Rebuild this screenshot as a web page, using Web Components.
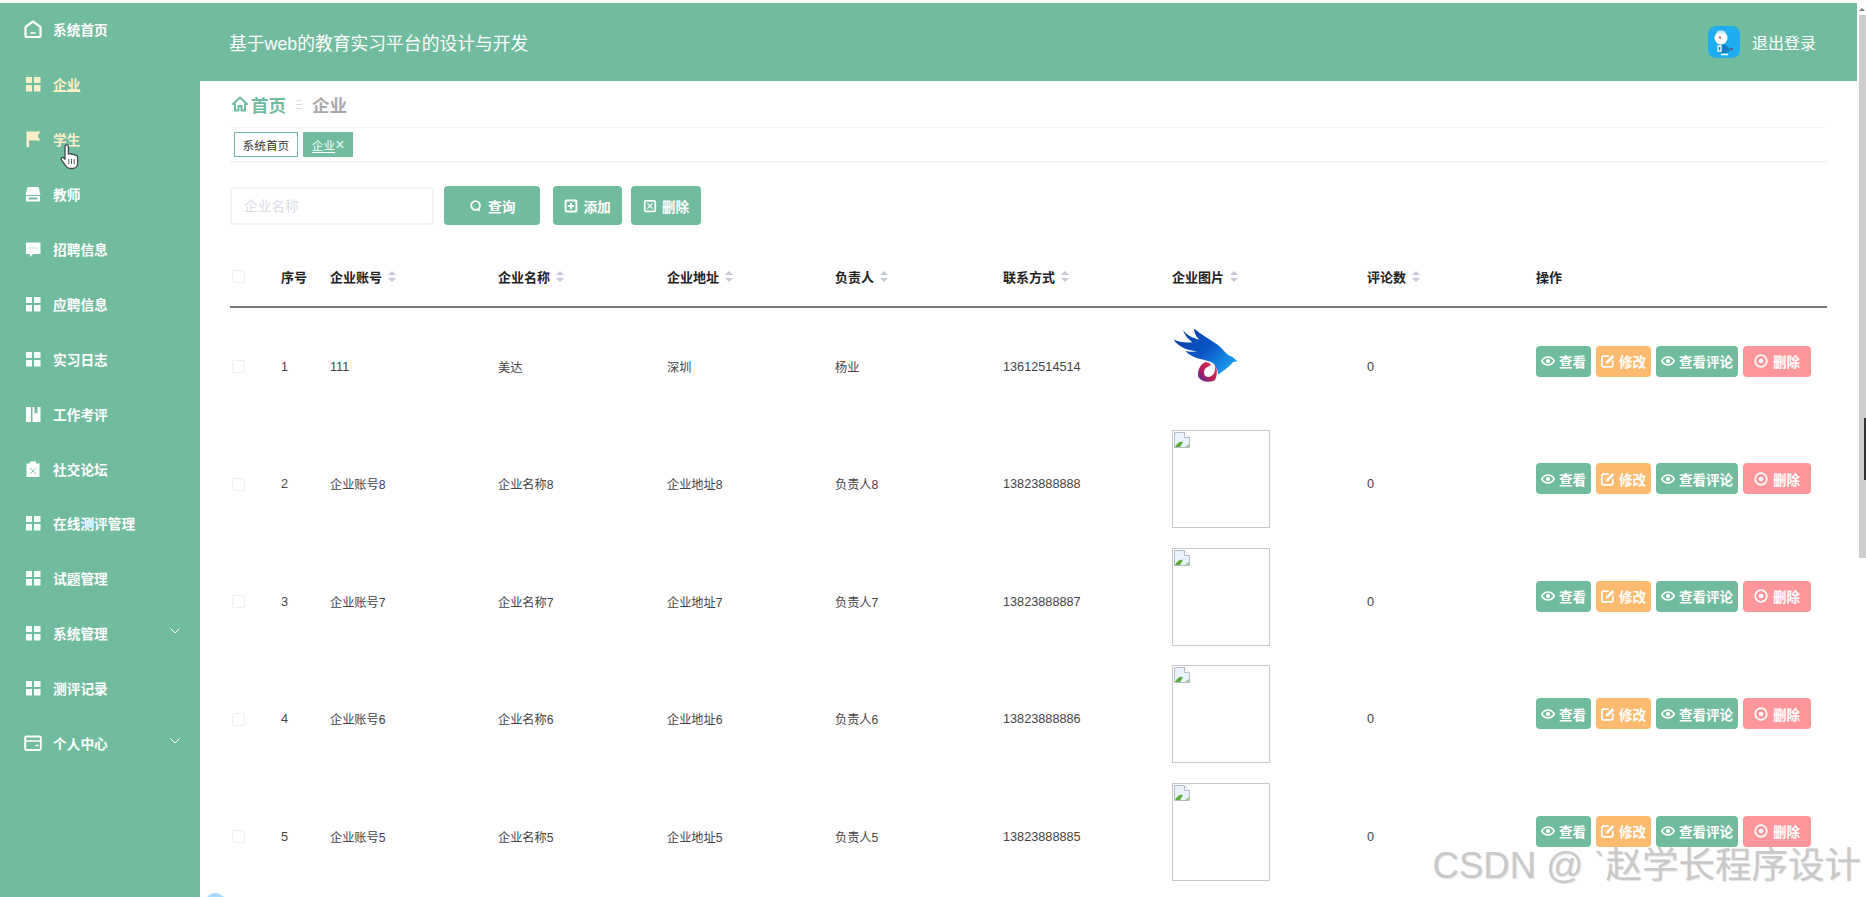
<!DOCTYPE html>
<html lang="zh">
<head>
<meta charset="utf-8">
<title>企业</title>
<style>
  html, body { margin: 0; height: 100%; overflow: hidden; background: #fff; }
  body {
    font-family: "Liberation Sans", "Noto Sans CJK SC", sans-serif;
    --green: #71bc9f;
    --cols: 51px 49px 168px 169px 168px 168px 169px 195px 169px 291px;
  }
</style>
</head>
<body>
<app-shell>
  <side-bar slot="side">
    <nav-item icon="home">系统首页</nav-item>
    <nav-item icon="grid" active under>企业</nav-item>
    <nav-item icon="flag" active>学生</nav-item>
    <nav-item icon="tray">教师</nav-item>
    <nav-item icon="chat">招聘信息</nav-item>
    <nav-item icon="grid">应聘信息</nav-item>
    <nav-item icon="grid">实习日志</nav-item>
    <nav-item icon="book">工作考评</nav-item>
    <nav-item icon="clip">社交论坛</nav-item>
    <nav-item icon="grid">在线测评管理</nav-item>
    <nav-item icon="grid">试题管理</nav-item>
    <nav-item icon="grid" more>系统管理</nav-item>
    <nav-item icon="grid">测评记录</nav-item>
    <nav-item icon="card" more>个人中心</nav-item>
  </side-bar>
  <top-bar slot="top" heading="基于web的教育实习平台的设计与开发"></top-bar>
  <bread-crumb slot="main"></bread-crumb>
  <tag-row slot="main"></tag-row>
  <tool-bar slot="main"></tool-bar>
  <table-head slot="main"></table-head>
  <table-row slot="main" no="1" account="111" name="美达" addr="深圳" owner="杨业" phone="13612514514" logo></table-row>
  <table-row slot="main" no="2" account="企业账号8" name="企业名称8" addr="企业地址8" owner="负责人8" phone="13823888888"></table-row>
  <table-row slot="main" no="3" account="企业账号7" name="企业名称7" addr="企业地址7" owner="负责人7" phone="13823888887"></table-row>
  <table-row slot="main" no="4" account="企业账号6" name="企业名称6" addr="企业地址6" owner="负责人6" phone="13823888886"></table-row>
  <table-row slot="main" no="5" account="企业账号5" name="企业名称5" addr="企业地址5" owner="负责人5" phone="13823888885"></table-row>
</app-shell>

<script>
  const ICONS = {
    home: '<path d="M9 1.500 16.500 7v9a1 1 0 0 1-1 1h-13a1 1 0 0 1-1-1V7z" fill="none" stroke="currentColor" stroke-width="2.200" stroke-linejoin="round"/><path d="M6.500 13h5" stroke="currentColor" stroke-width="1.600"/>',
    grid: '<path d="M2 2h6v6H2zM10 2h6.500v6H10zM2 10h6v6.500H2zM10 10h6.500v6.500H10z" fill="currentColor"/>',
    flag: '<path d="M2.500 1.500h14l-3 4.500 3 4.500H5V17H2.500z" fill="currentColor"/>',
    tray: '<path d="M4.500 2h9q1 0 1.300 1L16.500 10h-15L3.200 3Q3.500 2 4.500 2z" fill="currentColor"/><path d="M2 11h14v5.500H2z" fill="currentColor"/><path d="M4.500 12.500h9v2h-9z" fill="#71bc9f"/>',
    chat: '<path d="M2 2.500h14.500v11.500H9l-3 3v-3H2z" fill="currentColor"/><path d="M5.500 8h1.200M8.700 8h1.200M12 8h1.200" stroke="#71bc9f" stroke-width="1.200"/>',
    book: '<path d="M2 2h5v15H2zM8.500 2h2v7l1.500-1.500L13.500 9V2h3v15h-8z" fill="currentColor"/>',
    clip: '<path d="M6 1.500h6v2h3.500V17h-13V3.500H6z" fill="currentColor"/><path d="M6 8l6 6M12 8l-6 6" stroke="#71bc9f" stroke-width=".8"/>',
    card: '<rect x="1.200" y="2.500" width="15.600" height="13.500" rx="1.200" fill="none" stroke="currentColor" stroke-width="1.900"/><path d="M1.500 7h15M11.500 11.500h3" stroke="currentColor" stroke-width="1.500"/>',
    search: '<circle cx="7.500" cy="7.500" r="5" fill="none" stroke="currentColor" stroke-width="2.100"/><path d="m10 11.500 2.500 2" stroke="currentColor" stroke-width="2"/>',
    plus: '<rect x="1.800" y="1.800" width="12.400" height="12.400" rx="1" fill="none" stroke="currentColor" stroke-width="2.200"/><path d="M8 4.500v7M4.500 8h7" stroke="currentColor" stroke-width="2.200"/>',
    cross: '<rect x="2" y="2" width="12" height="12" rx="1" fill="none" stroke="currentColor" stroke-width="2"/><path d="m5 5 6 6M11 5l-6 6" stroke="currentColor" stroke-width="1.400"/>',
    eye: '<path d="M.8 8c1.800-3 4.200-4.500 7.200-4.500S13.400 5 15.200 8c-1.800 3-4.200 4.500-7.200 4.500S2.600 11 .8 8z" fill="none" stroke="currentColor" stroke-width="1.800"/><circle cx="8" cy="8" r="2.400" fill="currentColor"/>',
    edit: '<path d="M13.500 7.500V13a1.800 1.800 0 0 1-1.800 1.800H2.800A1.800 1.800 0 0 1 1 13V4.300a1.800 1.800 0 0 1 1.800-1.800H9" fill="none" stroke="currentColor" stroke-width="1.900"/><path d="m5.500 11 .6-3L13 1l2.300 2.300L8.500 10.400z" fill="currentColor"/>',
    del: '<circle cx="8" cy="8" r="6.600" fill="none" stroke="currentColor" stroke-width="2"/><circle cx="8" cy="8" r="2.700" fill="currentColor"/>'
  };

  class AppShell extends HTMLElement {
    constructor() {
      super();
      this.attachShadow({ mode: 'open' }).innerHTML = `
        <style>
          :host { display: grid; grid-template-columns: 200px 1fr 9px; grid-template-rows: 78px 1fr; height: 894px; padding-top: 3px; overflow: hidden; position: relative; }
          .side { grid-row: 1 / 3; display: flex; }
          .top { grid-column: 2; display: flex; flex-direction: column; }
          .main { grid-column: 2; grid-row: 2; padding: 0 30px; overflow: hidden; }
          .bar { grid-column: 3; grid-row: 1 / 3; margin-top: -3px; background: #fff; display: flex; flex-direction: column; align-items: flex-end; }
          .arrow { width: 0; height: 0; margin: 8px 1px 4px 0; border: 3px solid transparent; border-bottom-color: #777; border-top: 0; }
          .thumb { width: 7px; height: 543px; background: #cfcdcd; position: relative; }
          .dark { position: absolute; right: 0; top: 403px; width: 2px; height: 62px; background: #333; }
          .dot { position: absolute; left: 205px; top: 893px; width: 21px; height: 21px; border-radius: 50%; background: #a9d8ff; }
          .mark { position: absolute; right: 5px; top: 836px; font: 36.500px "Liberation Sans", "Noto Sans CJK SC", sans-serif; color: #c9c9c9; text-shadow: 1px 1px 1px #e2e2e2; white-space: nowrap; }
          .hand { position: absolute; left: 60px; top: 144px; }
        </style>
        <div class="side"><slot name="side"></slot></div>
        <div class="top"><slot name="top"></slot></div>
        <div class="main"><slot name="main"></slot></div>
        <div class="bar"><i class="arrow"></i><div class="thumb"><div class="dark"></div></div></div>
        <div class="dot"></div>
        <div class="mark">CSDN @ ˋ赵学长程序设计</div>
        <svg class="hand" width="20" height="26" viewBox="0 0 20 26">
          <path d="M5 2.500a1.700 1.700 0 0 1 3.400 0V10l1.500-.4c.8-.1 1.400.2 1.600.8l1.500-.2c.7 0 1.200.3 1.400.9l1.200 0c1.300.1 2 .9 2 2.200V19c0 3-2 5.500-5 5.500H10c-2 0-3.300-1-4.500-2.800L1.500 16c-.6-1-.3-1.900.5-2.300.7-.4 1.700-.1 2.200.6l.8 1z" fill="#fff" stroke="#3f4a4f" stroke-width="1.300" stroke-linejoin="round"/>
          <path d="M8.800 15v5M11.500 15v5M14.200 15v5" stroke="#3f4a4f" stroke-width=".9"/>
        </svg>`;
    }
  }

  class SideBar extends HTMLElement {
    constructor() {
      super();
      this.attachShadow({ mode: 'open' }).innerHTML = `
        <style>:host { display: flex; flex-direction: column; width: 200px; background: var(--green); }</style>
        <slot></slot>`;
    }
  }

  class NavItem extends HTMLElement {
    connectedCallback() {
      const icon = this.getAttribute('icon');
      this.attachShadow({ mode: 'open' }).innerHTML = `
        <style>
          :host { display: flex; align-items: center; box-sizing: border-box; height: 54.900px; flex: none; padding: 0 0 2px 24px; color: #fff; font-size: 13.700px; font-weight: 700; position: relative; }
          :host([active]) { color: #ffefc6; }
          :host([under]) span { text-decoration: underline; }
          svg.i { width: 18px; height: 18px; margin-right: 11px; flex: none; }
          .chev { position: absolute; left: 170px; top: 21px; }
        </style>
        <svg class="i" viewBox="0 0 18 18">${ICONS[icon]}</svg><span><slot></slot></span>
        ${this.hasAttribute('more') ? '<svg class="chev" width="10" height="6" viewBox="0 0 10 6"><path d="m.5.500 4.500 4.500L9.500.5" fill="none" stroke="#fff" stroke-width="1"/></svg>' : ''}`;
    }
  }

  class TopBar extends HTMLElement {
    connectedCallback() {
      this.attachShadow({ mode: 'open' }).innerHTML = `
        <style>
          :host { display: flex; align-items: center; height: 78px; background: var(--green); color: #fff; padding-left: 29px; }
          h1 { margin: 0; font-size: 17.800px; font-weight: 400; flex: 1; }
          svg { width: 32px; height: 32px; margin-right: 12px; }
          span { font-size: 16px; margin-right: 41px; }
        </style>
        <h1>${this.getAttribute('heading')}</h1>
        <svg viewBox="0 0 32 32">
          <rect width="32" height="32" rx="8" fill="#1eaef0"/>
          <ellipse cx="13" cy="12" rx="6.500" ry="6.500" fill="#fff"/>
          <path d="M9 5.500c2-1.500 6-1.500 8 0l1 3c-3-1.500-7-1.500-10 0z" fill="#cfe9f7"/>
          <circle cx="12" cy="11.500" r="1" fill="#d22"/>
          <path d="M13 19c4-1 8 1 9 5 0 2-3 3-6 3-4 0-6-1-6-3z" fill="#127dc4"/>
          <path d="M10 20h3v5h-3zM13 28.500h7" stroke="#fff" stroke-width="1.300" fill="none"/>
          <circle cx="23.500" cy="23" r="1.100" fill="#a01030"/>
        </svg>
        <span>退出登录</span>`;
    }
  }

  class BreadCrumb extends HTMLElement {
    constructor() {
      super();
      this.attachShadow({ mode: 'open' }).innerHTML = `
        <style>
          :host { display: flex; align-items: center; height: 46px; border-bottom: 1px solid #f6f6f6; padding-left: 2px; font-size: 17.500px; font-weight: 700; color: #a8a8a8; }
          svg { width: 16px; height: 16px; margin-right: 3px; color: var(--green); }
          .home { color: var(--green); }
          .sep { width: 6px; height: 9px; margin: 0 10px; background: repeating-linear-gradient(#ddd 0 1px, transparent 1px 4px); }
        </style>
        <svg viewBox="0 0 16 16"><path d="M8 1.500 15 8h-2v6.500H9.500V10h-3v4.500H3V8H1z" fill="none" stroke="currentColor" stroke-width="2" stroke-linejoin="round"/></svg>
        <span class="home">首页</span><i class="sep"></i><span>企业</span>`;
    }
  }

  class TagRow extends HTMLElement {
    constructor() {
      super();
      this.attachShadow({ mode: 'open' }).innerHTML = `
        <style>
          :host { display: flex; align-items: flex-start; gap: 5px; height: 29px; padding: 4px 0 0 4px; border-bottom: 2px solid #f4f4f4; font-size: 11.700px; }
          span { box-sizing: border-box; display: flex; align-items: center; height: 25px; padding: 0 7.500px; border: 1px solid var(--green); color: #333; }
          .on { background: var(--green); color: #fff; padding: 0 7px 0 8px; }
          u { text-underline-offset: 2px; }
          b { font-weight: 400; font-size: 16px; line-height: 1; color: #e6f4ee; }
        </style>
        <span>系统首页</span><span class="on"><u>企业</u><b>×</b></span>`;
    }
  }

  class ActionBtn extends HTMLElement {
    connectedCallback() {
      const icon = this.getAttribute('icon');
      this.attachShadow({ mode: 'open' }).innerHTML = `
        <style>
          :host { display: inline-flex; align-items: center; justify-content: center; gap: 4px; height: 31px; padding: 0 5px; box-sizing: border-box; border-radius: 4px; background: var(--bg, var(--green)); color: #fff; font-size: 13.500px; font-weight: 700; white-space: nowrap; }
          :host([wide]) { padding: 0 11px; gap: 5px; }
          :host([big]) { height: 39px; padding: 0 11px; gap: 5px; font-size: 13.700px; }
          svg { width: 14px; height: 14px; flex: none; }
        </style>
        <svg viewBox="0 0 16 16">${ICONS[icon]}</svg><slot></slot>`;
    }
  }

  class ToolBar extends HTMLElement {
    constructor() {
      super();
      this.attachShadow({ mode: 'open' }).innerHTML = `
        <style>
          :host { display: flex; align-items: center; padding: 23px 0 22px; }
          .inp { box-sizing: border-box; width: 204px; height: 38px; margin-right: 10px; padding: 0 0 1px 12px; display: flex; align-items: center; border: 2px solid #f3f3f3; border-radius: 4px; color: #dcdde6; font-size: 13.700px; }
          .q { padding: 0 25px; margin-right: 13px; }
          .add { margin-right: 9px; }
          .rm { padding: 0 12px; }
        </style>
        <div class="inp">企业名称</div>
        <action-btn big class="q" icon="search">查询</action-btn>
        <action-btn big class="add" icon="plus">添加</action-btn>
        <action-btn big class="rm" icon="cross">删除</action-btn>`;
    }
  }

  const CELL_CSS = `
    .cb { box-sizing: border-box; display: block; width: 13px; height: 13px; margin-left: 2px; border: 1px solid #efefef; border-radius: 2px; }
  `;

  class TableHead extends HTMLElement {
    constructor() {
      super();
      const sort = '<svg width="8" height="11" viewBox="0 0 8 11"><path d="M4 0 8 4H0zM4 11 0 7h8z" fill="#c5c9d3"/></svg>';
      const col = t => `<div>${t}${sort}</div>`;
      this.attachShadow({ mode: 'open' }).innerHTML = `
        <style>
          :host { display: grid; grid-template-columns: var(--cols); align-items: center; box-sizing: border-box; height: 61px; border-bottom: 2px solid #777; font-size: 13px; font-weight: 700; color: #222; }
          div { display: flex; align-items: center; gap: 6px; }
          ${CELL_CSS}
        </style>
        <i class="cb"></i><div>序号</div>
        ${['企业账号', '企业名称', '企业地址', '负责人', '联系方式', '企业图片', '评论数'].map(col).join('')}
        <div>操作</div>`;
    }
  }

  class TableRow extends HTMLElement {
    connectedCallback() {
      const a = n => this.getAttribute(n);
      const logo = `<svg class="logo" width="72" height="60" viewBox="60 20 210 175">
        <defs>
          <linearGradient id="w" x1="0" y1="0" x2="1" y2=".7"><stop offset="0" stop-color="#0a3aa8"/><stop offset=".55" stop-color="#0a55c4"/><stop offset="1" stop-color="#1a9cf0"/></linearGradient>
          <linearGradient id="t" x1="1" y1="0" x2="0" y2="1"><stop offset="0" stop-color="#f0304a"/><stop offset=".6" stop-color="#b0205c"/><stop offset="1" stop-color="#4030a0"/></linearGradient>
        </defs>
        <path d="M130 30c20 18 45 30 70 48 15 12 25 30 40 34l17 14-13 2c-9 12-29 27-44 37 0-15-8-37-30-40l-10-3c-20-4-40-10-55-26 15 4 27 2 35 0-25-1-55-11-70-34 15 8 35 10 55 8-13-10-23-22-27-35 10 13 27 23 47 27-10-10-15-20-15-32z" fill="url(#w)"/>
        <path d="M165 128c-15 4-25 22-23 42 8 15 28 20 48 12 8-12 10-32 0-52 5 20 0 40-18 42-14 0-17-17-7-27 10-5 25-10 0-17z" fill="url(#t)"/>
      </svg>`;
      const broken = `<div class="img"><svg width="16" height="16" viewBox="0 0 16 16">
        <path d="M.5.500h10l5 5v10H.5z" fill="#eaf2fc" stroke="#b5bcc6"/><path d="M10.500.5v5h5" fill="#fff" stroke="#b5bcc6"/>
        <path d="M1 15c2-4 5-6 8-5l-3 5z" fill="#5cab3c"/><path d="M11 15l4-3v3z" fill="#9ac98a"/>
      </svg></div>`;
      this.attachShadow({ mode: 'open' }).innerHTML = `
        <style>
          :host { display: grid; grid-template-columns: var(--cols); align-items: center; height: 117.500px; font-size: 12.200px; color: #444; }
          ${CELL_CSS}
          .num { font-size: 12.700px; }
          .pic { align-self: stretch; display: flex; align-items: center; padding-bottom: 10px; box-sizing: border-box; }
          .pic.hasLogo { align-items: flex-start; padding: 17px 0 0; }
          .img { box-sizing: border-box; width: 98px; height: 98px; padding: 1px; border: 1px solid #c8c8c8; }
          .img svg { display: block; }
          .logo { display: block; margin-left: -2px; }
          .ops { align-self: stretch; display: flex; align-items: center; gap: 5px; padding-bottom: 11px; box-sizing: border-box; }
          .warn { --bg: #feba6f; }
          .bad { --bg: #ff969c; }
        </style>
        <i class="cb"></i><div class="num">${a('no')}</div><div class="${/^\d+$/.test(a('account')) ? 'num' : ''}">${a('account')}</div><div>${a('name')}</div>
        <div>${a('addr')}</div><div>${a('owner')}</div><div class="num">${a('phone')}</div>
        <div class="pic ${this.hasAttribute('logo') ? 'hasLogo' : ''}">${this.hasAttribute('logo') ? logo : broken}</div>
        <div class="num">0</div>
        <div class="ops">
          <action-btn icon="eye">查看</action-btn>
          <action-btn class="warn" icon="edit">修改</action-btn>
          <action-btn icon="eye">查看评论</action-btn>
          <action-btn class="bad" wide icon="del">删除</action-btn>
        </div>`;
    }
  }

  customElements.define('action-btn', ActionBtn);
  customElements.define('nav-item', NavItem);
  customElements.define('side-bar', SideBar);
  customElements.define('top-bar', TopBar);
  customElements.define('bread-crumb', BreadCrumb);
  customElements.define('tag-row', TagRow);
  customElements.define('tool-bar', ToolBar);
  customElements.define('table-head', TableHead);
  customElements.define('table-row', TableRow);
  customElements.define('app-shell', AppShell);
</script>
</body>
</html>
